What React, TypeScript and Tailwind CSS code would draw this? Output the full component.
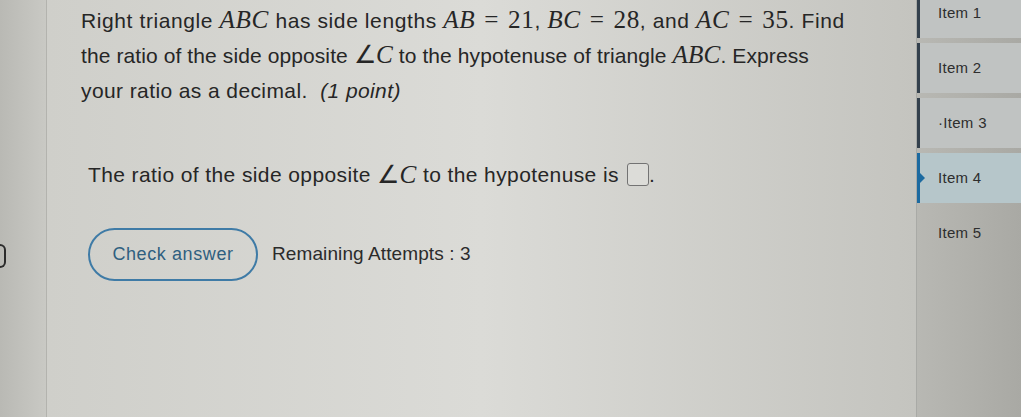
import React from 'react';

const M: React.FC<{ children: React.ReactNode }> = ({ children }) => (
  <span className="font-['Liberation_Serif',serif] italic text-[1.2em] leading-none">{children}</span>
);

const N: React.FC<{ children: React.ReactNode }> = ({ children }) => (
  <span className="font-['Liberation_Serif',serif] text-[1.2em] leading-none">{children}</span>
);

const Eq = () => <span className="mx-[9px] font-['Liberation_Serif',serif] text-[1.2em] leading-none">=</span>;

const items = ['Item 1', 'Item 2', 'Item 3', 'Item 4', 'Item 5'];

export default function App() {
  return (
    <div className="flex h-[417px] w-[1021px] overflow-hidden bg-[#cfcfca] font-['Liberation_Sans',Arial,sans-serif] text-[#262626]">
      {/* previous panel edge */}
      <div className="flex w-[47px] shrink-0 flex-col border-r border-[#b3b3ae] bg-linear-to-r from-[#b9b9b4] to-[#c9c9c4]">
        <div className="mt-[244px] h-[24px] w-[6px] rounded-r-full border-2 border-l-0 border-[#2b2b2b]" />
      </div>

      {/* main question */}
      <div className="flex flex-1 flex-col bg-linear-to-r from-[#cfcfca] via-[#dbdbd7] to-[#c4c4bf] pl-[34px] pt-[3px] tracking-[0.4px]">
        <div className="text-[21px] leading-[35px]">
          <div className="tracking-[0.6px]">
            Right triangle <M>ABC</M> has side lengths <M>AB</M><Eq /><N>21</N>, <M>BC</M><Eq /><N>28</N>, and{' '}
            <M>AC</M><Eq /><N>35</N>. Find
          </div>
          <div className="tracking-[0.1px]">
            the ratio of the side opposite <N>∠</N><M>C</M> to the hypotenuse of triangle <M>ABC</M>. Express
          </div>
          <div>
            your ratio as a decimal.&nbsp; <span className="italic">(1 point)</span>
          </div>
        </div>

        <div className="mt-[51px] flex items-center pl-[7px] text-[21px]">
          The ratio of the side opposite&nbsp;<N>∠</N><M>C</M>&nbsp;to the hypotenuse is
          <span className="ml-[8px] inline-block h-[23px] w-[22px] rounded-[3px] border-[1.5px] border-[#737373] bg-[#dcdcd8]" />
          .
        </div>

        <div className="mt-[37px] flex items-center gap-[14px] pl-[7px]">
          <button className="h-[53px] w-[170px] rounded-full border-2 border-[#3f7ba6] text-[18px] tracking-[0.6px] text-[#2f5f80]">
            Check answer
          </button>
          <span className="text-[19px] tracking-[0.1px] text-[#2b2b2b]">Remaining Attempts : 3</span>
        </div>
      </div>

      {/* item list */}
      <div className="-mt-[12px] flex w-[105px] shrink-0 flex-col gap-[5px] border-l border-[#a9aaa6] bg-linear-to-r from-[#b8b8b3] to-[#a9a9a4]">
        {items.map((it, i) => {
          const active = i === 3;
          const done = i < 3;
          return (
            <div
              key={it}
              className={`relative flex h-[50px] items-center pl-[18px] text-[15px] tracking-[0.3px] ${
                active
                  ? 'border-l-[3px] border-[#1c6aa0] bg-[#b6c6ca]'
                  : done
                    ? 'border-l-[3px] border-[#33404c] bg-[#c0c3c2]'
                    : 'pl-[21px]'
              }`}
            >
              {active && (
                <span className="absolute left-0 top-1/2 h-0 w-0 -translate-y-1/2 border-y-[5px] border-l-[5px] border-y-transparent border-l-[#1c6aa0]" />
              )}
              <span className="text-[#2e2e2e]">{i === 2 ? '·' : ''}{it}</span>
            </div>
          );
        })}
      </div>
    </div>
  );
}
